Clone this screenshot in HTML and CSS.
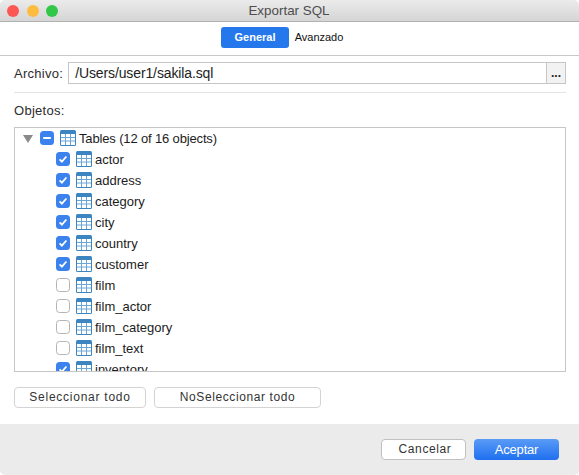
FILE: index.html
```html
<!DOCTYPE html>
<html>
<head>
<meta charset="UTF-8">
<title>Exportar SQL</title>
<link rel="stylesheet" href="styles.css">
</head>
<body>

<svg class="defs" width="0" height="0">
	<symbol id="table" viewBox="0 0 16 16">
		<rect x="0" y="0" width="16" height="16" rx="1.5" fill="#3d85c0"/>
		<rect x="1" y="4" width="14" height="11" fill="#fff"/>
		<path d="M5.5 4v11M10.5 4v11M1 7.5h14M1 11h14" stroke="#6ba6d8" stroke-width="1" fill="none"/>
	</symbol>
	<symbol id="check" viewBox="0 0 14 14">
		<rect width="14" height="14" rx="3.5" fill="#3b82ee"/>
		<path d="M3.6 7.4l2.3 2.3 4.5-5.2" stroke="#fff" stroke-width="1.8" fill="none"/>
	</symbol>
	<symbol id="mixed" viewBox="0 0 14 14">
		<rect width="14" height="14" rx="3.5" fill="#3b82ee"/>
		<rect x="3.2" y="6" width="7.6" height="2" fill="#fff"/>
	</symbol>
</svg>

<div class="window">
	<div class="titlebar">
		<div class="lights">
			<span class="light red"></span>
			<span class="light yellow"></span>
			<span class="light green"></span>
		</div>
		<div class="title">Exportar SQL</div>
	</div>

	<div class="tabs">
		<div class="tab active">General</div>
		<div class="tab">Avanzado</div>
	</div>

	<div class="content">
		<div class="file-row">
			<label class="label">Archivo:</label>
			<div class="file-input">
				<div class="file-path">/Users/user1/sakila.sql</div>
				<div class="file-btn">...</div>
			</div>
		</div>
		<div class="separator"></div>
		<div class="label objects-label">Objetos:</div>

		<div class="tree">
			<div class="tree-row">
				<span class="arrow"></span>
				<svg class="box"><use href="#mixed"/></svg>
				<svg class="icon"><use href="#table"/></svg>
				<span class="group-name">Tables (12 of 16 objects)</span>
			</div>
			<div class="tree-row child"><svg class="box"><use href="#check"/></svg><svg class="icon"><use href="#table"/></svg><span>actor</span></div>
			<div class="tree-row child"><svg class="box"><use href="#check"/></svg><svg class="icon"><use href="#table"/></svg><span>address</span></div>
			<div class="tree-row child"><svg class="box"><use href="#check"/></svg><svg class="icon"><use href="#table"/></svg><span>category</span></div>
			<div class="tree-row child"><svg class="box"><use href="#check"/></svg><svg class="icon"><use href="#table"/></svg><span>city</span></div>
			<div class="tree-row child"><svg class="box"><use href="#check"/></svg><svg class="icon"><use href="#table"/></svg><span>country</span></div>
			<div class="tree-row child"><svg class="box"><use href="#check"/></svg><svg class="icon"><use href="#table"/></svg><span>customer</span></div>
			<div class="tree-row child"><span class="box empty"></span><svg class="icon"><use href="#table"/></svg><span>film</span></div>
			<div class="tree-row child"><span class="box empty"></span><svg class="icon"><use href="#table"/></svg><span>film_actor</span></div>
			<div class="tree-row child"><span class="box empty"></span><svg class="icon"><use href="#table"/></svg><span>film_category</span></div>
			<div class="tree-row child"><span class="box empty"></span><svg class="icon"><use href="#table"/></svg><span>film_text</span></div>
			<div class="tree-row child"><svg class="box"><use href="#check"/></svg><svg class="icon"><use href="#table"/></svg><span>inventory</span></div>
		</div>

		<div class="select-btns">
			<div class="btn select-all">Seleccionar todo</div>
			<div class="btn select-none">NoSeleccionar todo</div>
		</div>
	</div>

	<div class="footer">
		<div class="btn cancel">Cancelar</div>
		<div class="btn accept">Aceptar</div>
	</div>
</div>

</body>
</html>
```

FILE: styles.css
```css
html, body {
	margin: 0;
	padding: 0;
	background: #fff;
}

body {
	font-family: "Liberation Sans", Arial, sans-serif;
	font-size: 13px;
	color: #222;
}

.defs {
	display: block;
	height: 0;
}

.window {
	width: 579px;
	height: 475px;
	display: flex;
	flex-direction: column;
	border-radius: 5px;
	overflow: hidden;
	background: #fff;
}

.titlebar {
	height: 21px;
	flex: none;
	position: relative;
	display: flex;
	align-items: center;
	justify-content: center;
	padding-right: 1px;
	background: linear-gradient(#ebebeb, #d5d5d5);
	border-bottom: 1px solid #b1b1b1;
}

.lights {
	position: absolute;
	left: 7px;
	top: 5px;
	display: flex;
	gap: 7.5px;
}

.light {
	width: 12px;
	height: 12px;
	border-radius: 50%;
}

.red { background: #fc5753; }
.yellow { background: #fdbc40; }
.green { background: #33c748; }

.title {
	font-size: 13.4px;
	color: #4d4d4d;
}

.tabs {
	height: 34px;
	flex: none;
	display: flex;
	align-items: center;
	justify-content: center;
	box-sizing: border-box;
	border-bottom: 1px solid #c8c8c8;
	padding: 0 7px 2px 0;
	font-size: 11px;
	color: #111;
}

.tab {
	width: 62px;
	height: 21px;
	line-height: 21px;
	padding-right: 2px;
	box-sizing: border-box;
	text-align: center;
}

.tab.active {
	width: 68px;
	padding-right: 0;
	background: #2478ec;
	color: #fff;
	font-weight: bold;
	border-radius: 3px;
}

.content {
	flex: 1;
	padding: 6px 13px 0 14px;
}

.file-row {
	display: flex;
	align-items: center;
	gap: 5px;
	height: 22px;
}

.label {
	font-size: 13px;
	letter-spacing: 0.28px;
	color: #2c2c2c;
}

.file-input {
	flex: 1;
	height: 22px;
	box-sizing: border-box;
	display: flex;
	border: 1px solid #c6c6c6;
}

.file-path {
	flex: 1;
	padding-left: 6px;
	line-height: 20px;
	font-size: 14px;
	letter-spacing: -0.12px;
	color: #222;
}

.file-btn {
	width: 18px;
	text-align: center;
	line-height: 20px;
	background: #f2f2f2;
	border-left: 1px solid #c6c6c6;
	font-weight: bold;
	font-size: 12px;
}

.separator {
	height: 1px;
	margin-top: 8px;
	background: #e3e3e3;
}

.objects-label {
	margin-top: 10px;
	height: 24px;
	line-height: 15px;
}

.tree {
	height: 245px;
	box-sizing: border-box;
	overflow: hidden;
	border: 1px solid #c6c6c6;
}

.tree-row {
	height: 21px;
	display: flex;
	align-items: center;
	padding-left: 8px;
	font-size: 13px;
	color: #1c1c1c;
}

.tree-row.child {
	padding-left: 41px;
}

.group-name {
	letter-spacing: -0.15px;
}

.arrow {
	width: 0;
	height: 0;
	margin-right: 7px;
	border-left: 5px solid transparent;
	border-right: 5px solid transparent;
	border-top: 8px solid #8a8a8a;
}

.box {
	width: 14px;
	height: 14px;
	flex: none;
	margin: 0 6px 2px 0;
}

.box.empty {
	box-sizing: border-box;
	background: #fff;
	border: 1px solid #b4b4b4;
	border-radius: 3.5px;
}

.icon {
	width: 16px;
	height: 16px;
	flex: none;
	margin: 0 3px 2px 0;
}

.select-btns {
	display: flex;
	gap: 8px;
	margin-top: 15px;
}

.btn {
	height: 21px;
	box-sizing: border-box;
	line-height: 19px;
	text-align: center;
	font-size: 12px;
	letter-spacing: 0.6px;
	color: #333;
	background: #fff;
	border: 1px solid #d3d3d3;
	border-radius: 4px;
}

.select-all {
	width: 132px;
	letter-spacing: 0.75px;
}

.select-none { width: 167px; }

.footer {
	height: 51px;
	flex: none;
	box-sizing: border-box;
	display: flex;
	justify-content: flex-end;
	gap: 8px;
	padding: 15px 20px 0 0;
	background: #ebebeb;
}

.cancel {
	width: 85px;
	padding-left: 3px;
	border-color: #c0c0c0;
}

.accept {
	width: 85px;
	border: none;
	line-height: 21px;
	font-size: 13px;
	letter-spacing: -0.2px;
	color: #fff;
	background: linear-gradient(#5a9bf5, #1f6ff0);
}
```
